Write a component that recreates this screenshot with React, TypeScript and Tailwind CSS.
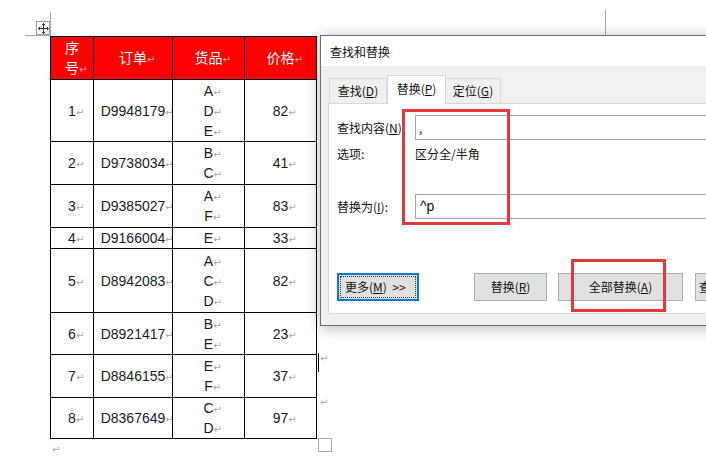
import React from 'react'

const rows = [
  { n: '1', id: 'D9948179', goods: ['A', 'D', 'E'], price: '82', h: 'h-[62px]' },
  { n: '2', id: 'D9738034', goods: ['B', 'C'], price: '41', h: 'h-[43px]' },
  { n: '3', id: 'D9385027', goods: ['A', 'F'], price: '83', h: 'h-[43px]' },
  { n: '4', id: 'D9166004', goods: ['E'], price: '33', h: 'h-[20px]' },
  { n: '5', id: 'D8942083', goods: ['A', 'C', 'D'], price: '82', h: 'h-[64px]' },
  { n: '6', id: 'D8921417', goods: ['B', 'E'], price: '23', h: 'h-[42px]' },
  { n: '7', id: 'D8846155', goods: ['E', 'F'], price: '37', h: 'h-[43px]' },
  { n: '8', id: 'D8367649', goods: ['C', 'D'], price: '97', h: 'h-[41px]' },
]

// word's paragraph mark; zero width so it doesn't shift centred text
function Mark({ header }: { header?: boolean }) {
  return (
    <span
      className={`inline-block w-0 leading-none text-[10px] font-['DejaVu_Sans',sans-serif] ${
        header ? 'text-[#f6a5a5]' : 'text-[#a8a8a8]'
      }`}
    >
      ↵
    </span>
  )
}

function Cell({ children, header }: { children: React.ReactNode; header?: boolean }) {
  return (
    <td className={`border border-black p-0 align-middle ${header ? 'bg-[#ff0000] text-white' : 'text-[#1a1a1a]'}`}>
      <div className="overflow-hidden text-center">{children}</div>
    </td>
  )
}

function Line({ text, header }: { text: string; header?: boolean }) {
  return (
    <div className="h-[20px] leading-[20px] whitespace-nowrap">
      {text}
      <Mark header={header} />
    </div>
  )
}

function MoveHandle() {
  return (
    <div className="w-[14px] h-[14px] border border-[#a0a0a0] bg-white flex items-center justify-center">
      <svg width="11" height="11" viewBox="0 0 11 11" fill="none" stroke="#333" strokeWidth="1">
        <path d="M5.5 0.5v10M0.5 5.5h10" />
        <path d="M3.8 2.2L5.5 0.5L7.2 2.2M3.8 8.8L5.5 10.5L7.2 8.8M2.2 3.8L0.5 5.5L2.2 7.2M8.8 3.8L10.5 5.5L8.8 7.2" />
      </svg>
    </div>
  )
}

function Btn({ children, focused, className }: { children: React.ReactNode; focused?: boolean; className: string }) {
  if (focused) {
    return (
      <div className={`shrink-0 h-[28px] border-2 border-[#0a78d4] bg-[#e1e1e1] p-[1px] ${className}`}>
        <div className="h-full border border-dotted border-[#333] flex items-center pl-[4px] whitespace-nowrap">
          {children}
        </div>
      </div>
    )
  }
  return (
    <div
      className={`shrink-0 h-[28px] border border-[#adadad] bg-[#e1e1e1] flex items-center justify-center whitespace-nowrap ${className}`}
    >
      {children}
    </div>
  )
}

function Dialog() {
  return (
    <div className="absolute left-[320px] top-[35px] w-[500px] h-[291px] border border-[#6f6f6f] bg-[#f0f0f0] shadow-[0_2px_14px_rgba(0,0,0,0.28)] text-[12px] text-[#111] font-['Noto_Sans_CJK_SC',sans-serif]">
      <div className="h-[30px] bg-white flex items-center pl-[9px] pt-[2px]">查找和替换</div>
      <div className="pl-[7px] pt-[9px]">
        <div className="flex items-end h-[28px] pl-[1px]">
          <div className="w-[58px] h-[25px] border border-b-0 border-[#d9d9d9] bg-[#f0f0f0] flex items-center justify-center">
            查找(<span className="underline">D</span>)
          </div>
          <div className="relative z-10 w-[59px] h-[29px] -mb-[1px] border border-b-0 border-[#d9d9d9] bg-white flex items-center justify-center pb-[2px]">
            替换(<span className="underline">P</span>)
          </div>
          <div className="w-[55px] h-[25px] border border-b-0 border-l-0 border-[#d9d9d9] bg-[#f0f0f0] flex items-center justify-center">
            定位(<span className="underline">G</span>)
          </div>
        </div>
        <div className="h-[211px] bg-white border border-[#d9d9d9] flex flex-col pl-[8px]">
          <div className="mt-[11px] h-[25px] flex items-center">
            <div className="w-[78px] shrink-0">
              查找内容(<span className="underline">N</span>):
            </div>
            <div className="flex-1 h-full border border-[#a5a5a5] flex items-center pl-[3px] text-[12px]">,</div>
          </div>
          <div className="mt-[5px] h-[18px] flex items-center">
            <div className="w-[78px] shrink-0">选项:</div>
            <div>区分全/半角</div>
          </div>
          <div className="mt-[31px] h-[25px] flex items-center">
            <div className="w-[78px] shrink-0">
              替换为(<span className="underline">I</span>):
            </div>
            <div className="flex-1 h-full border border-[#a5a5a5] flex items-center pl-[4px] text-[14px] font-['Liberation_Sans',sans-serif]">
              ^p
            </div>
          </div>
          <div className="mt-[54px] flex">
            <Btn focused className="w-[82px]">
              更多(<span className="underline">M</span>)&nbsp;&nbsp;&gt;&gt;
            </Btn>
            <Btn className="w-[73px] ml-[55px]">
              替换(<span className="underline">R</span>)
            </Btn>
            <Btn className="w-[125px] ml-[11px]">
              全部替换(<span className="underline">A</span>)
            </Btn>
            <Btn className="w-[100px] ml-[12px] justify-start pl-[3px]">查找下一处(F)</Btn>
          </div>
        </div>
      </div>
    </div>
  )
}

export default function App() {
  return (
    <div className="relative w-[706px] h-[459px] overflow-hidden bg-white font-['Liberation_Sans','Noto_Sans_CJK_SC',sans-serif] text-[14px]">
      {/* page corner marks */}
      <div className="absolute left-[50px] top-[12px] w-px h-[24px] bg-[#a8a8a8]" />
      <div className="absolute left-[25px] top-[35px] w-[26px] h-px bg-[#a8a8a8]" />
      <div className="absolute left-[36px] top-[21px]">
        <MoveHandle />
      </div>
      <div className="absolute left-[605px] top-[10px] w-px h-[26px] bg-[#a8a8a8]" />

      <div className="pl-[50px] pt-[36px]">
        <table className="table-fixed border-collapse w-[267px]">
          <colgroup>
            <col className="w-[43px]" />
            <col className="w-[79px]" />
            <col className="w-[72px]" />
            <col className="w-[72px]" />
          </colgroup>
          <thead>
            <tr className="h-[43px]">
              <Cell header>
                <div className="h-[20px] leading-[20px]">序</div>
                <Line text="号" header />
              </Cell>
              <Cell header>
                <Line text="订单" header />
              </Cell>
              <Cell header>
                <Line text="货品" header />
              </Cell>
              <Cell header>
                <Line text="价格" header />
              </Cell>
            </tr>
          </thead>
          <tbody>
            {rows.map((r) => (
              <tr key={r.n} className={r.h}>
                <Cell>
                  <Line text={r.n} />
                </Cell>
                <Cell>
                  <Line text={r.id} />
                </Cell>
                <Cell>
                  {r.goods.map((g, i) => (
                    <Line key={i} text={g} />
                  ))}
                </Cell>
                <Cell>
                  <Line text={r.price} />
                </Cell>
              </tr>
            ))}
          </tbody>
        </table>
        <div className="text-[10px] leading-none text-[#a8a8a8] font-['DejaVu_Sans',sans-serif] pl-[2px] pt-[6px]">↵</div>
      </div>

      {/* end-of-row marks, cursor and resize handle */}
      <div className="absolute left-[318px] top-[353px] w-px h-[19px] bg-black" />
      <div className="absolute left-[320px] top-[354px] text-[10px] leading-none text-[#a8a8a8] font-['DejaVu_Sans',sans-serif]">↵</div>
      <div className="absolute left-[320px] top-[398px] text-[10px] leading-none text-[#a8a8a8] font-['DejaVu_Sans',sans-serif]">↵</div>
      <div className="absolute left-[318px] top-[438px] w-[14px] h-[14px] border border-[#a8a8a8]" />

      <Dialog />

      {/* red highlight boxes */}
      <div className="absolute left-[402px] top-[109px] w-[108px] h-[116px] border-[3px] border-[#e0393e]" />
      <div className="absolute left-[571px] top-[259px] w-[95px] h-[53px] border-[3px] border-[#e0393e]" />
    </div>
  )
}
